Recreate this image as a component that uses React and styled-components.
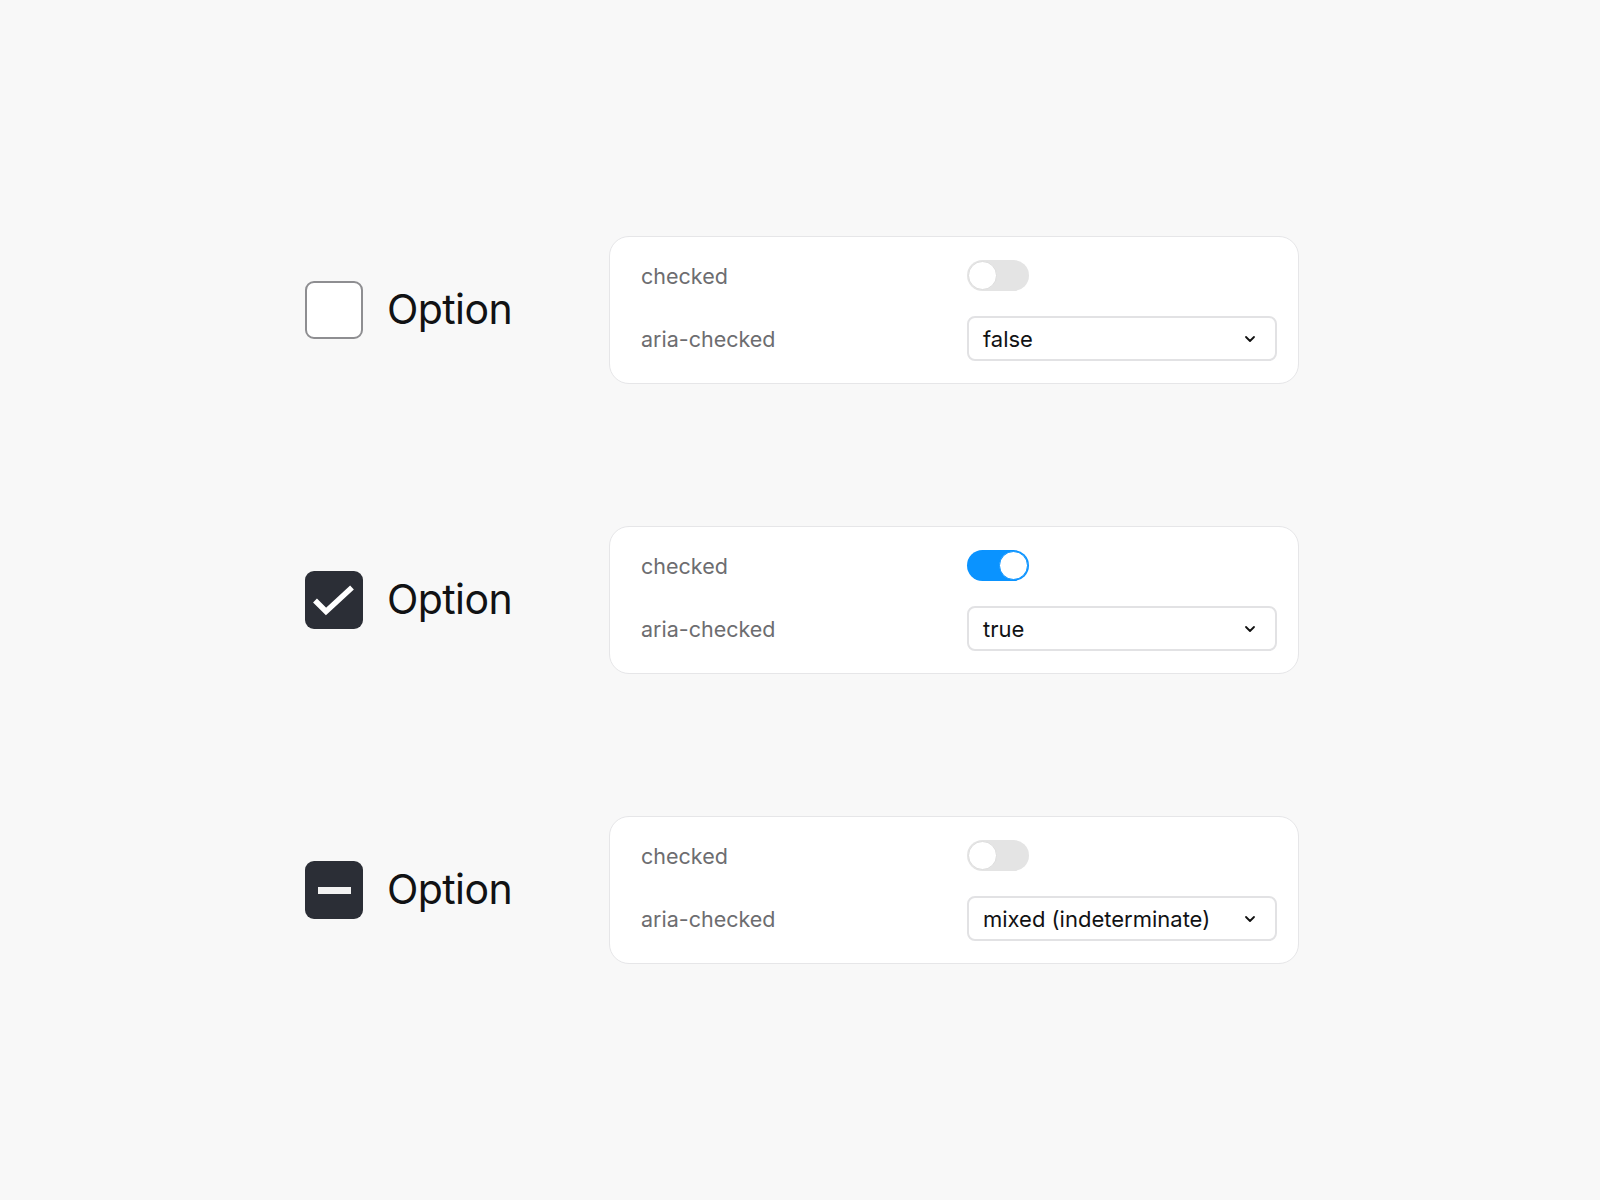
import React from 'react'
import { styled, createGlobalStyle } from 'styled-components'

const GlobalStyle = createGlobalStyle`
  html, body {
    margin: 0;
    padding: 0;
    background: #f8f8f8;
  }
  body {
    font-family: Inter, "Noto Sans", sans-serif;
  }
`

const rows = [
  { state: 'unchecked', on: false, value: 'false' },
  { state: 'checked', on: true, value: 'true' },
  { state: 'mixed', on: false, value: 'mixed (indeterminate)' },
]

export default function App() {
  return (
    <Page>
      <GlobalStyle />
      <List>
        {rows.map((r) => (
          <Row key={r.state}>
            <Demo>
              <Box $state={r.state}>
                {r.state === 'checked' && (
                  <svg width="58" height="58" viewBox="0 0 58 58">
                    <path d="M10 29.5 L21 40.5 L47 16.5" fill="none" stroke="#fff" strokeWidth="5.5" />
                  </svg>
                )}
                {r.state === 'mixed' && <Dash />}
              </Box>
              <Label>Option</Label>
            </Demo>
            <Card>
              <Field>
                <FieldName>checked</FieldName>
                <Toggle $on={r.on}>
                  <Knob $on={r.on} />
                </Toggle>
              </Field>
              <Field>
                <FieldName>aria-checked</FieldName>
                <Select>
                  <span>{r.value}</span>
                  <svg width="12" height="8" viewBox="0 0 12 8">
                    <path d="M2 2 L6 6 L10 2" fill="none" stroke="#111" strokeWidth="1.8" strokeLinecap="round" strokeLinejoin="round" />
                  </svg>
                </Select>
              </Field>
            </Card>
          </Row>
        ))}
      </List>
    </Page>
  )
}

const Page = styled.div`
  width: 1600px;
  height: 1200px;
  display: flex;
  align-items: center;
  justify-content: center;
`

const List = styled.div`
  display: flex;
  flex-direction: column;
  gap: 142px;
  margin-left: 4px;
`

const Row = styled.div`
  display: flex;
  align-items: center;
`

const Demo = styled.div`
  width: 304px;
  display: flex;
  align-items: center;
  gap: 24px;
`

const Box = styled.div`
  box-sizing: border-box;
  width: 58px;
  height: 58px;
  border-radius: 9px;
  display: flex;
  align-items: center;
  justify-content: center;
  background: ${(p) => (p.$state === 'unchecked' ? '#fff' : '#2b2e36')};
  border: ${(p) => (p.$state === 'unchecked' ? '2.5px solid #8e8e91' : 'none')};
  svg {
    display: block;
  }
`

const Dash = styled.div`
  width: 33px;
  height: 7px;
  background: #f2f2f2;
`

const Label = styled.div`
  font-size: 41px;
  color: #111214;
  letter-spacing: -0.6px;
  line-height: 1;
  padding-bottom: 2px;
`

const Card = styled.div`
  box-sizing: border-box;
  width: 690px;
  background: #fff;
  border: 1px solid #e6e6e8;
  border-radius: 20px;
  padding: 23px 21px 22px 31px;
  display: flex;
  flex-direction: column;
  gap: 25px;
`

const Field = styled.div`
  display: flex;
  align-items: center;
`

const FieldName = styled.div`
  width: 326px;
  font-size: 21.5px;
  color: #6d6d70;
`

const Toggle = styled.div`
  box-sizing: border-box;
  width: 62px;
  height: 31px;
  border-radius: 16px;
  background: ${(p) => (p.$on ? '#0a93ff' : '#e4e4e4')};
  display: flex;
  align-items: center;
  justify-content: ${(p) => (p.$on ? 'flex-end' : 'flex-start')};
  padding: 1px;
`

const Knob = styled.div`
  box-sizing: border-box;
  width: 29px;
  height: 29px;
  border-radius: 50%;
  background: #fff;
  border: 1px solid ${(p) => (p.$on ? '#0a93ff' : '#dcdcdc')};
`

const Select = styled.div`
  box-sizing: border-box;
  width: 310px;
  height: 45px;
  border: 2px solid #e2e2e4;
  border-radius: 8px;
  padding: 0 19px 0 14px;
  display: flex;
  align-items: center;
  justify-content: space-between;
  font-size: 22px;
  color: #111214;
  svg {
    display: block;
  }
`
